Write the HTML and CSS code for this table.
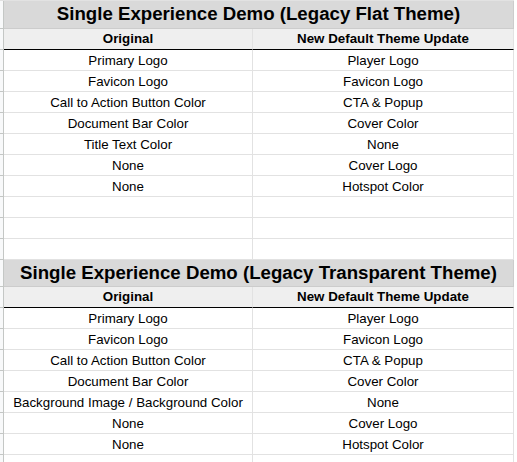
FILE: index.html
```html
<!DOCTYPE html>
<html>
<head>
<meta charset="utf-8">
<link rel="stylesheet" href="styles.css">
</head>
<body>
<div class="sheet">
  <div class="row title-row"><div class="rh"></div><div class="c title">Single Experience Demo (Legacy Flat Theme)</div></div>
  <div class="row head-row"><div class="rh"></div><div class="c head">Original</div><div class="c head">New Default Theme Update</div></div>
  <div class="row"><div class="rh"></div><div class="c">Primary Logo</div><div class="c">Player Logo</div></div>
  <div class="row"><div class="rh"></div><div class="c">Favicon Logo</div><div class="c">Favicon Logo</div></div>
  <div class="row"><div class="rh"></div><div class="c">Call to Action Button Color</div><div class="c">CTA &amp; Popup</div></div>
  <div class="row"><div class="rh"></div><div class="c">Document Bar Color</div><div class="c">Cover Color</div></div>
  <div class="row"><div class="rh"></div><div class="c">Title Text Color</div><div class="c">None</div></div>
  <div class="row"><div class="rh"></div><div class="c">None</div><div class="c">Cover Logo</div></div>
  <div class="row"><div class="rh"></div><div class="c">None</div><div class="c">Hotspot Color</div></div>
  <div class="row"><div class="rh"></div><div class="c"></div><div class="c"></div></div>
  <div class="row"><div class="rh"></div><div class="c"></div><div class="c"></div></div>
  <div class="row"><div class="rh"></div><div class="c"></div><div class="c"></div></div>
  <div class="row title-row title-row-2"><div class="rh"></div><div class="c title">Single Experience Demo (Legacy Transparent Theme)</div></div>
  <div class="row head-row"><div class="rh"></div><div class="c head">Original</div><div class="c head">New Default Theme Update</div></div>
  <div class="row"><div class="rh"></div><div class="c">Primary Logo</div><div class="c">Player Logo</div></div>
  <div class="row"><div class="rh"></div><div class="c">Favicon Logo</div><div class="c">Favicon Logo</div></div>
  <div class="row"><div class="rh"></div><div class="c">Call to Action Button Color</div><div class="c">CTA &amp; Popup</div></div>
  <div class="row"><div class="rh"></div><div class="c">Document Bar Color</div><div class="c">Cover Color</div></div>
  <div class="row"><div class="rh"></div><div class="c">Background Image / Background Color</div><div class="c">None</div></div>
  <div class="row"><div class="rh"></div><div class="c">None</div><div class="c">Cover Logo</div></div>
  <div class="row"><div class="rh"></div><div class="c">None</div><div class="c">Hotspot Color</div></div>
  <div class="row"><div class="rh"></div><div class="c"></div><div class="c"></div></div>
</div>
</body>
</html>
```

FILE: styles.css
```css
html, body {
  margin: 0;
  padding: 0;
  background: #ffffff;
}
body {
  font-family: "Liberation Sans", Arial, sans-serif;
  color: #000;
  overflow: hidden;
}
.sheet {
  border-top: 1px solid #e2e2e2;
  width: 514px;
}
.row {
  display: grid;
  grid-template-columns: 4px 249px 261px;
  height: 21px;
}
.rh {
  background: #f8f9fa;
  border-right: 1px solid #c4c7c5;
  border-bottom: 1px solid #c4c7c5;
  box-sizing: border-box;
}
.c {
  box-sizing: border-box;
  border-right: 1px solid #e2e2e2;
  border-bottom: 1px solid #e2e2e2;
  font-size: 13.33px;
  line-height: 22px;
  text-align: center;
  white-space: nowrap;
  overflow: hidden;
}
.title-row {
  height: 28px;
}
.title-row-2 {
  height: 27px;
}
.title {
  grid-column: 2 / 4;
  background: #d9d9d9;
  border-right-color: #cccccc;
  border-bottom-color: #cccccc;
  font-weight: bold;
  font-size: 18.67px;
  line-height: 26px;
}
.head {
  background: #efefef;
  font-weight: bold;
  line-height: 20px;
  border-bottom: 1px solid #000;
}
```
